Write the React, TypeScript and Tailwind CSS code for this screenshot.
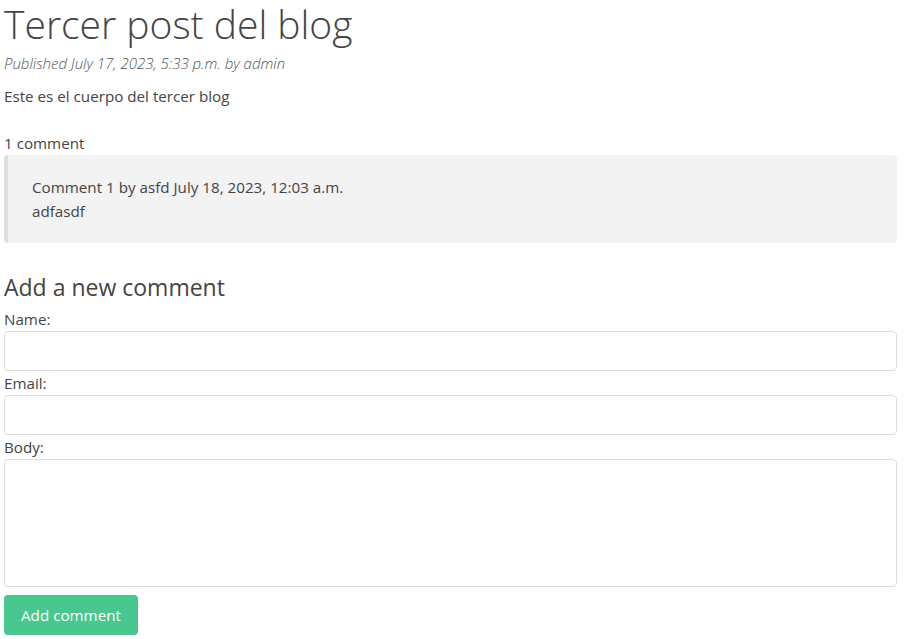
export default function App() {
  const font = { fontFamily: '"Open Sans", "Noto Sans", sans-serif' };
  return (
    <div className="bg-white pl-1 pr-[10px] text-[#444]" style={font}>
      <h1 className="text-[39px] leading-[48px] font-light">Tercer post del blog</h1>
      <p className="mt-[3px] text-[15px] leading-[24px] italic font-light text-[#555]">
        Published July 17, 2023, 5:33 p.m. by admin
      </p>
      <p className="mt-[9px] text-[15.2px] leading-6">Este es el cuerpo del tercer blog</p>

      <h2 className="mt-[23px] text-[15.2px] leading-6">1 comment</h2>
      <div className="rounded border-l-4 border-[#dddddd] bg-[#f3f3f3] py-[20px] pl-[24px] text-[15.2px] leading-6">
        <p>Comment 1 by asfd July 18, 2023, 12:03 a.m.</p>
        <p>adfasdf</p>
      </div>

      <h2 className="mt-[28px] text-[23px] leading-8">Add a new comment</h2>
      <form className="mt-1 text-[15.2px] leading-6">
        <label className="block">Name:</label>
        <input className="block h-10 w-full rounded border border-[#dddddd]" />
        <label className="block">Email:</label>
        <input className="block h-10 w-full rounded border border-[#dddddd]" />
        <label className="block">Body:</label>
        <textarea className="block h-32 w-full resize-none rounded border border-[#dddddd]" />
        <button
          type="button"
          className="mt-2 h-10 rounded bg-[#48c78e] px-[17px] text-[15.2px] text-white"
        >
          Add comment
        </button>
      </form>
    </div>
  );
}
